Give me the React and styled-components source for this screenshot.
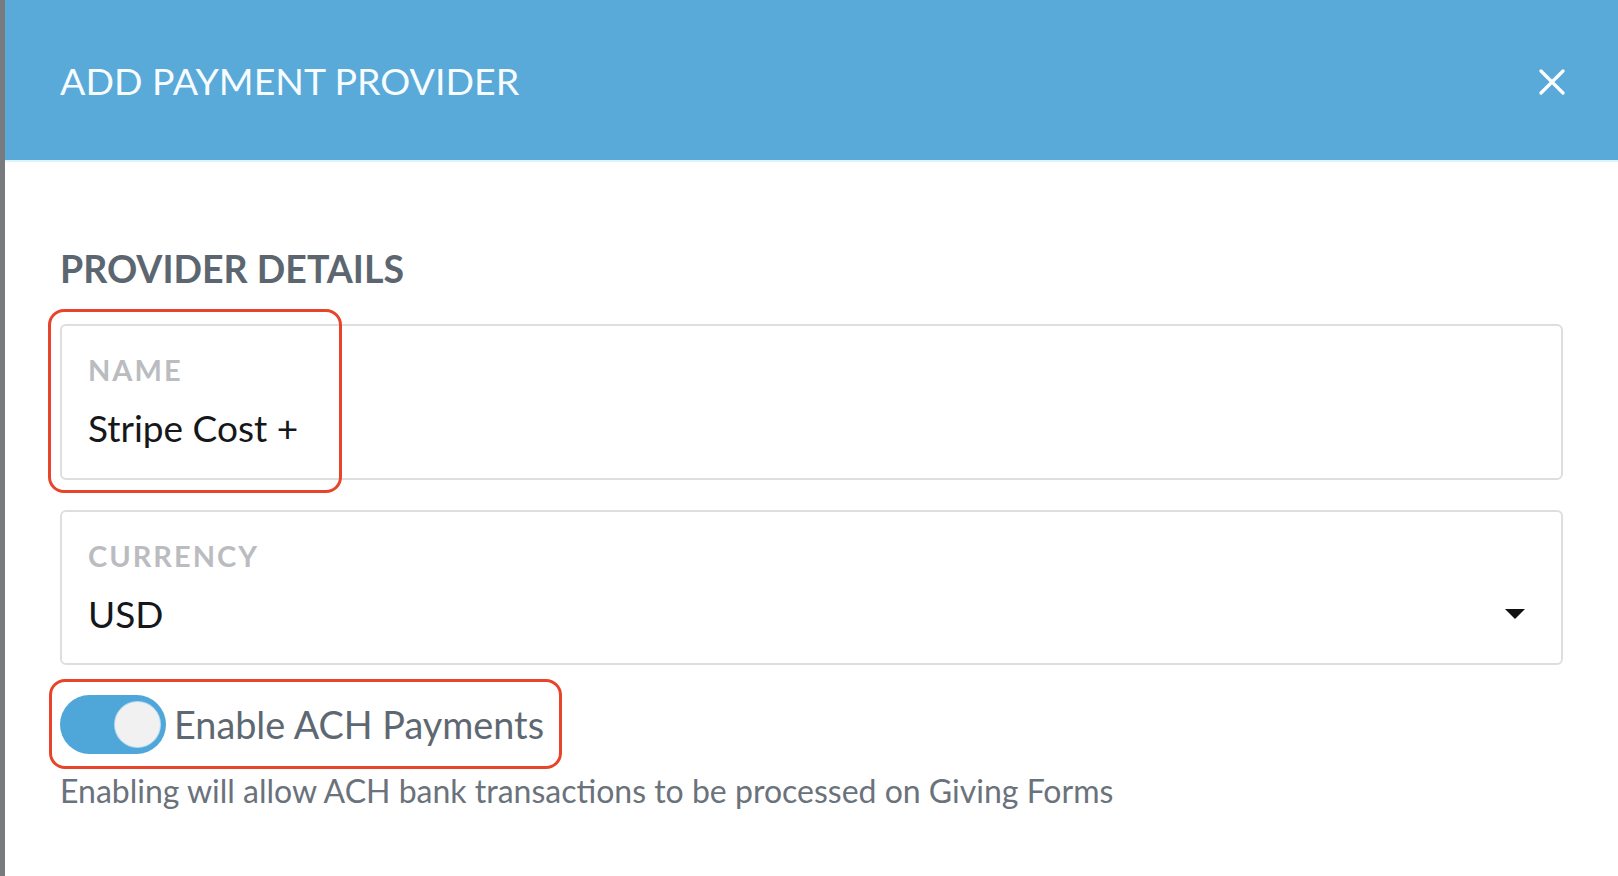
import React from 'react';
import styled, { createGlobalStyle } from 'styled-components';

const GlobalStyle = createGlobalStyle`
  html, body {
    margin: 0;
    padding: 0;
    background: #ffffff;
    font-family: Lato, "Open Sans", sans-serif;
  }
  * { box-sizing: border-box; }
`;

const Page = styled.div`
  display: flex;
  width: 1618px;
  height: 876px;
  overflow: hidden;
  background: #ffffff;
`;

const EdgeBar = styled.div`
  width: 5px;
  flex-shrink: 0;
  background: #777b7e;
`;

const Modal = styled.div`
  flex: 1;
  display: flex;
  flex-direction: column;
`;

const Header = styled.div`
  height: 162px;
  display: flex;
  align-items: center;
  justify-content: space-between;
  padding: 0 51px 0 55px;
  background: #59a9d9;
  border-bottom: 2px solid #dff3fb;
`;

const Title = styled.h1`
  margin: 0;
  font-size: 37.5px;
  font-weight: 400;
  color: #f6fcff;
`;

const CloseButton = styled.button`
  display: flex;
  align-items: center;
  justify-content: center;
  width: 30px;
  height: 30px;
  padding: 0;
  margin-top: 3px;
  border: none;
  background: transparent;
  cursor: pointer;
`;

const Body = styled.div`
  display: flex;
  flex-direction: column;
  padding: 86px 55px 0 55px;
`;

const SectionTitle = styled.h2`
  margin: 0 0 34px 0;
  font-size: 37.5px;
  line-height: 42px;
  font-weight: 700;
  color: #5c6670;
`;

const Highlight = styled.div`
  position: relative;
  margin-top: ${p => p.offset || 0}px;
`;

const Outline = styled.div`
  position: absolute;
  top: ${p => p.top}px;
  left: ${p => p.left}px;
  width: ${p => p.width}px;
  height: ${p => p.height}px;
  border: 3px solid #e8442b;
  border-radius: 16px;
  pointer-events: none;
`;

const Field = styled.div`
  position: relative;
  display: flex;
  flex-direction: column;
  height: ${p => p.height}px;
  padding: 24px 26px 0 26px;
  margin-bottom: ${p => p.gap || 0}px;
  border: 2px solid #dedede;
  border-radius: 6px;
  background: #ffffff;
`;

const Label = styled.span`
  font-size: 29px;
  line-height: 40px;
  font-weight: 700;
  letter-spacing: 2px;
  color: #babcbf;
`;

const Value = styled.span`
  margin-top: 16px;
  font-size: 37px;
  line-height: 44px;
  color: #15171a;
`;

const Caret = styled.span`
  position: absolute;
  right: 36px;
  top: 97px;
  width: 0;
  height: 0;
  border-left: 10px solid transparent;
  border-right: 10px solid transparent;
  border-top: 10px solid #111111;
`;

const ToggleRow = styled.div`
  display: inline-flex;
  align-items: center;
  gap: 8px;
`;

const Track = styled.div`
  display: flex;
  align-items: center;
  justify-content: ${p => (p.on ? 'flex-end' : 'flex-start')};
  width: 106px;
  height: 59px;
  padding: 0 6px;
  border-radius: 30px;
  background: ${p => (p.on ? '#4fa6d9' : '#c9ccd0')};
`;

const Knob = styled.div`
  width: 45px;
  height: 45px;
  border-radius: 50%;
  background: #f1f1f1;
  box-shadow: 0 0 0 1px #b7dcf0;
`;

const ToggleText = styled.span`
  font-size: 37.8px;
  line-height: 44px;
  color: #5e6872;
`;

const Hint = styled.p`
  margin: 18px 0 0 0;
  font-size: 32px;
  line-height: 38px;
  color: #6a727b;
`;

export default function App() {
  return (
    <>
      <GlobalStyle />
      <Page>
        <EdgeBar />
        <Modal>
          <Header>
            <Title>ADD PAYMENT PROVIDER</Title>
            <CloseButton aria-label="Close">
              <svg width="26" height="26" viewBox="0 0 26 26">
                <path d="M2 2 L24 24 M24 2 L2 24" stroke="#ffffff" strokeWidth="3.2" strokeLinecap="round" />
              </svg>
            </CloseButton>
          </Header>
          <Body>
            <SectionTitle>PROVIDER DETAILS</SectionTitle>
            <Highlight>
              <Field height={156} gap={30}>
                <Label>NAME</Label>
                <Value>Stripe Cost +</Value>
              </Field>
              <Outline top={-15} left={-12} width={294} height={184} />
            </Highlight>
            <Field height={155}>
              <Label>CURRENCY</Label>
              <Value>USD</Value>
              <Caret />
            </Field>
            <Highlight offset={30}>
              <ToggleRow>
                <Track on>
                  <Knob />
                </Track>
                <ToggleText>Enable ACH Payments</ToggleText>
              </ToggleRow>
              <Outline top={-16} left={-11} width={513} height={90} />
            </Highlight>
            <Hint>Enabling will allow ACH bank transactions to be processed on Giving Forms</Hint>
          </Body>
        </Modal>
      </Page>
    </>
  );
}
